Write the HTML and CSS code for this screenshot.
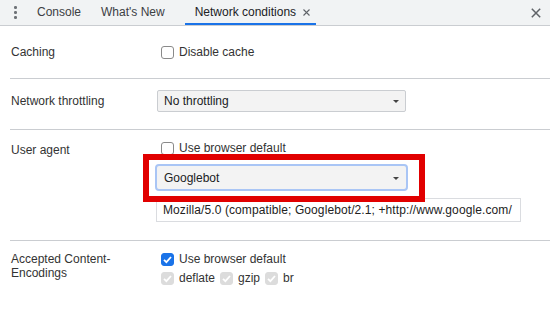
FILE: index.html
```html
<!DOCTYPE html>
<html>
<head>
<meta charset="utf-8">
<link rel="stylesheet" href="styles.css">
</head>
<body>
<div class="tabbar">
  <div class="kebab"><span></span><span></span><span></span></div>
  <div class="tab">Console</div>
  <div class="tab closeable">What's New<span class="tab-x hidden">✕</span></div>
  <div class="tab closeable active">Network conditions<span class="tab-x">
    <svg width="7" height="7" viewBox="0 0 7 7"><path d="M0.5 0.5L6.5 6.5M6.5 0.5L0.5 6.5" stroke="#5f6368" stroke-width="1.1"/></svg></span></div>
  <div class="spacer"></div>
  <div class="close">
    <svg width="10" height="10" viewBox="0 0 10 10"><path d="M0.8 0.8L9.2 9.2M9.2 0.8L0.8 9.2" stroke="#5f6368" stroke-width="1.5"/></svg>
  </div>
</div>

<div class="row row-caching">
  <div class="label">Caching</div>
  <div class="controls">
    <label class="check"><span class="box"></span>Disable cache</label>
  </div>
</div>

<div class="row row-throttle">
  <div class="label">Network throttling</div>
  <div class="controls">
    <div class="select">No throttling<span class="arrow"></span></div>
  </div>
</div>

<div class="row row-ua">
  <div class="label label-ua">User agent</div>
  <div class="controls">
    <label class="check"><span class="box"></span>Use browser default</label>
    <div class="select select-focus">Googlebot<span class="arrow"></span></div>
    <div class="text-input">Mozilla/5.0 (compatible; Googlebot/2.1; +http://www.google.com/</div>
  </div>
</div>

<div class="row row-enc">
  <div class="label label-enc">Accepted Content-<br>Encodings</div>
  <div class="controls">
    <label class="check check-tall"><span class="box checked"><svg width="13" height="13" viewBox="0 0 13 13"><path d="M3 6.8L5.4 9.2L10 4" fill="none" stroke="#fff" stroke-width="1.8"/></svg></span>Use browser default</label>
    <div class="sub">
      <label class="check"><span class="box disabled"><svg width="13" height="13" viewBox="0 0 13 13"><path d="M3 6.8L5.4 9.2L10 4" fill="none" stroke="#fff" stroke-width="1.8"/></svg></span>deflate</label>
      <label class="check"><span class="box disabled"><svg width="13" height="13" viewBox="0 0 13 13"><path d="M3 6.8L5.4 9.2L10 4" fill="none" stroke="#fff" stroke-width="1.8"/></svg></span>gzip</label>
      <label class="check"><span class="box disabled"><svg width="13" height="13" viewBox="0 0 13 13"><path d="M3 6.8L5.4 9.2L10 4" fill="none" stroke="#fff" stroke-width="1.8"/></svg></span>br</label>
    </div>
  </div>
</div>

<div class="annotation"></div>
</body>
</html>
```

FILE: styles.css
```css
html, body {
  margin: 0;
  padding: 0;
  background: #fff;
}
body {
  font-family: "Liberation Sans", Arial, sans-serif;
  font-size: 12px;
  color: #333;
  width: 550px;
  height: 312px;
  overflow: hidden;
  position: relative;
}
.tabbar {
  display: flex;
  align-items: stretch;
  height: 25px;
  background: #f1f3f4;
  border-bottom: 1px solid #cacdd1;
}
.kebab {
  width: 27px;
  display: flex;
  flex-direction: column;
  align-items: center;
  justify-content: center;
  gap: 2.5px;
  padding-left: 4px;
  box-sizing: border-box;
}
.kebab span {
  width: 2.5px;
  height: 2.5px;
  border-radius: 50%;
  background: #6e7277;
}
.tab {
  display: flex;
  align-items: center;
  padding: 0 10px;
  color: #3c4043;
  line-height: 25px;
  box-sizing: border-box;
}
.tab.closeable {
  padding-right: 6px;
}
.tab-x {
  display: inline-flex;
  align-items: center;
  margin-left: 7px;
  width: 7px;
  font-size: 8px;
  color: #5f6368;
}
.tab-x.hidden {
  visibility: hidden;
}
.tab.active {
  color: #202124;
  box-shadow: inset 0 -2px 0 #1a73e8;
}
.spacer {
  flex: 1;
}
.close {
  width: 26px;
  display: flex;
  align-items: center;
  justify-content: center;
  padding-right: 1px;
}
.row {
  display: flex;
  margin-left: 10px;
  border-bottom: 1px solid #cacdd1;
}
.label {
  width: 146px;
  padding-left: 1px;
  line-height: 16px;
}
.controls {
  display: flex;
  flex-direction: column;
}
.check {
  display: flex;
  align-items: center;
  line-height: 16px;
  color: #333;
}
.box {
  width: 11px;
  height: 11px;
  border: 1px solid #8a8a8a;
  border-radius: 3px;
  margin: 0 5px 0 4px;
  background: #fff;
  position: relative;
  flex: none;
}
.box svg {
  position: absolute;
  left: -1px;
  top: -1px;
}
.box.checked {
  background: #1a73e8;
  border-color: #1a73e8;
}
.box.disabled {
  background: #dcdcdc;
  border-color: #dcdcdc;
}
.row-caching {
  padding: 18px 0 18px;
}
.row-throttle {
  padding: 11px 0 17px;
  align-items: center;
}
.select {
  width: 249px;
  height: 22px;
  box-sizing: border-box;
  border: 1px solid #cacdd1;
  border-radius: 2px;
  background: #f3f3f3;
  padding-left: 6px;
  display: flex;
  align-items: center;
  position: relative;
  color: #202124;
}
.arrow {
  position: absolute;
  right: 6px;
  top: 50%;
  margin-top: -1px;
  width: 0;
  height: 0;
  border-left: 3px solid transparent;
  border-right: 3px solid transparent;
  border-top: 3px solid #444;
}
.row-ua {
  padding: 10px 0 18px;
}
.label-ua {
  padding-top: 2px;
}
.select-focus {
  width: 253px;
  height: 27px;
  margin-left: -2px;
  margin-top: 8px;
  border: 2px solid #a9c5f5;
  border-radius: 4px;
  padding-left: 7px;
}
.select-focus .arrow {
  right: 7px;
}
.text-input {
  width: 365px;
  height: 24px;
  box-sizing: border-box;
  margin-left: -1px;
  margin-top: 7px;
  border: 1px solid #dadce0;
  padding: 0 6px;
  line-height: 22px;
  white-space: nowrap;
  overflow: hidden;
  color: #222;
  letter-spacing: 0.1px;
}
.row-enc {
  padding: 11px 0 0;
  border-bottom: none;
}
.label-enc {
  line-height: 14px;
}
.check-tall {
  line-height: 16px;
  margin-top: -1px;
}
.sub {
  display: flex;
  margin-top: 3px;
}
.sub .check .box {
  margin-right: 5px;
}
.sub .check + .check .box {
  margin-left: 5px;
}
.annotation {
  position: absolute;
  left: 143px;
  top: 154px;
  width: 270px;
  height: 36px;
  border: 6px solid #e10000;
}
```
